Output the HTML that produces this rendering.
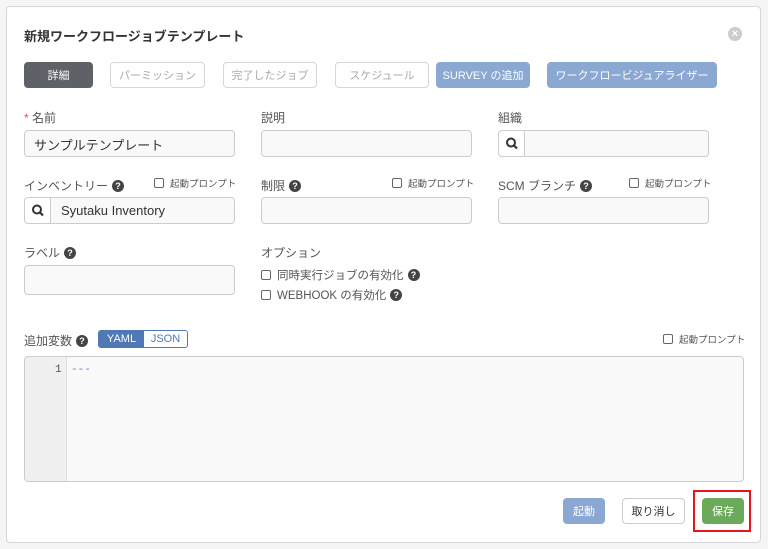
<!DOCTYPE html>
<html><head><meta charset="utf-8"><style>
*{box-sizing:border-box;margin:0;padding:0}
body{width:768px;height:549px;background:#f5f5f5;font-family:"Liberation Sans","Noto Sans CJK JP",sans-serif;color:#333;position:relative;overflow:hidden}
.panel{position:absolute;left:6px;top:6px;width:755px;height:537px;background:#fff;border:1px solid #d7d7d7;border-radius:4px}
.a{position:absolute}
.t{font-size:12px;color:#555;white-space:nowrap}
.btn{position:absolute;height:26px;border:1px solid #d7d7d7;border-radius:4px;font-size:11px;color:#aaa;display:flex;align-items:center;justify-content:center;background:#fff;white-space:nowrap}
.inp{position:absolute;height:27px;border:1px solid #ccc;border-radius:4px;background:#f9f9f9}
.q{display:inline-block;width:12px;height:12px;border-radius:50%;background:#444;color:#fff;font-size:9px;font-weight:bold;text-align:center;line-height:12px;vertical-align:middle;margin-left:4px;margin-top:-2px}
.cb{display:inline-block;width:10px;height:10px;border:1px solid #666;border-radius:2px;vertical-align:-1px;margin-right:6px;background:#fff}
.sp{font-size:9.5px;color:#555;white-space:nowrap}
.srch{position:absolute;left:0;top:0;width:26px;height:25px;border-right:1px solid #ccc;background:#fff;border-radius:4px 0 0 4px}
</style></head><body>
<div class="panel"></div>
<div class="a" style="left:24px;top:26px;font-size:13px;font-weight:bold;color:#333">新規ワークフロージョブテンプレート</div>
<div class="a" style="left:728px;top:27px;width:14px;height:14px;border-radius:50%;background:#ccc;color:#fff;font-size:11px;font-weight:bold;text-align:center;line-height:14px">×</div>

<div class="btn" style="left:24px;top:62px;width:69px;background:#5f6169;border-color:#5f6169;color:#fff">詳細</div>
<div class="btn" style="left:110px;top:62px;width:95px">パーミッション</div>
<div class="btn" style="left:223px;top:62px;width:94px">完了したジョブ</div>
<div class="btn" style="left:335px;top:62px;width:94px">スケジュール</div>
<div class="btn" style="left:436px;top:62px;width:94px;background:#8aa8d2;border-color:#8aa8d2;color:#fff">SURVEY の追加</div>
<div class="btn" style="left:547px;top:62px;width:170px;background:#8aa8d2;border-color:#8aa8d2;color:#fff">ワークフロービジュアライザー</div>

<div class="a t" style="left:24px;top:109px"><span style="color:#d9534f">*</span> 名前</div>
<div class="a t" style="left:261px;top:109px">説明</div>
<div class="a t" style="left:498px;top:109px">組織</div>
<div class="inp" style="left:24px;top:130px;width:211px"><span class="a" style="left:9px;top:4px;font-size:13px;color:#333">サンプルテンプレート</span></div>
<div class="inp" style="left:261px;top:130px;width:211px"></div>
<div class="inp" style="left:498px;top:130px;width:211px"><div class="srch"><svg width="26" height="25"><circle cx="12" cy="11.5" r="4" fill="none" stroke="#333" stroke-width="2"/><path d="M15 14.5l3 3" stroke="#333" stroke-width="2.2"/></svg></div></div>

<div class="a t" style="left:24px;top:177px">インベントリー<span class="q">?</span></div>
<div class="a sp" style="left:154px;top:176px"><span class="cb"></span>起動プロンプト</div>
<div class="a t" style="left:261px;top:177px">制限<span class="q">?</span></div>
<div class="a sp" style="left:392px;top:176px"><span class="cb"></span>起動プロンプト</div>
<div class="a t" style="left:498px;top:177px">SCM ブランチ<span class="q">?</span></div>
<div class="a sp" style="left:629px;top:176px"><span class="cb"></span>起動プロンプト</div>
<div class="inp" style="left:24px;top:197px;width:211px"><div class="srch"><svg width="26" height="25"><circle cx="12" cy="11.5" r="4" fill="none" stroke="#333" stroke-width="2"/><path d="M15 14.5l3 3" stroke="#333" stroke-width="2.2"/></svg></div><span class="a" style="left:36px;top:5px;font-size:13px;color:#333">Syutaku Inventory</span></div>
<div class="inp" style="left:261px;top:197px;width:211px"></div>
<div class="inp" style="left:498px;top:197px;width:211px"></div>

<div class="a t" style="left:24px;top:244px">ラベル<span class="q">?</span></div>
<div class="inp" style="left:24px;top:265px;width:211px;height:30px"></div>
<div class="a t" style="left:261px;top:244px">オプション</div>
<div class="a t" style="left:261px;top:267px;font-size:11.5px"><span class="cb"></span>同時実行ジョブの有効化<span class="q">?</span></div>
<div class="a t" style="left:261px;top:287px;font-size:11.5px"><span class="cb"></span>WEBHOOK の有効化<span class="q">?</span></div>

<div class="a t" style="left:24px;top:332px">追加変数<span class="q">?</span></div>
<div class="a" style="left:98px;top:330px;width:90px;height:18px;border:1px solid #4f78b5;border-radius:3px;display:flex;font-size:11px;overflow:hidden">
<div style="width:45px;background:#4f78b5;color:#fff;text-align:center;line-height:16px">YAML</div>
<div style="flex:1;color:#4f78b5;text-align:center;line-height:16px;background:#fff">JSON</div></div>
<div class="a sp" style="left:663px;top:332px"><span class="cb"></span>起動プロンプト</div>

<div class="a" style="left:24px;top:356px;width:720px;height:126px;border:1px solid #ccc;border-radius:4px;background:#f9f9f9;overflow:hidden">
<div class="a" style="left:0;top:0;width:42px;height:126px;background:#f0f0f0;border-right:1px solid #ddd"></div>
<div class="a" style="left:30px;top:7px;font-family:'Liberation Mono',monospace;font-size:11px;color:#555">1</div>
<div class="a" style="left:46px;top:7px;font-family:'Liberation Mono',monospace;font-size:11px;color:#8a6bd8">---</div>
</div>

<div class="btn" style="left:563px;top:498px;width:42px;background:#8aa8d2;border-color:#8aa8d2;color:#fff">起動</div>
<div class="btn" style="left:622px;top:498px;width:63px;color:#333;border-color:#ccc">取り消し</div>
<div class="a" style="left:693px;top:490px;width:58px;height:42px;border:2px solid #e8141a"></div>
<div class="btn" style="left:702px;top:498px;width:42px;background:#6aaa5a;border-color:#6aaa5a;color:#fff">保存</div>
</body></html>
